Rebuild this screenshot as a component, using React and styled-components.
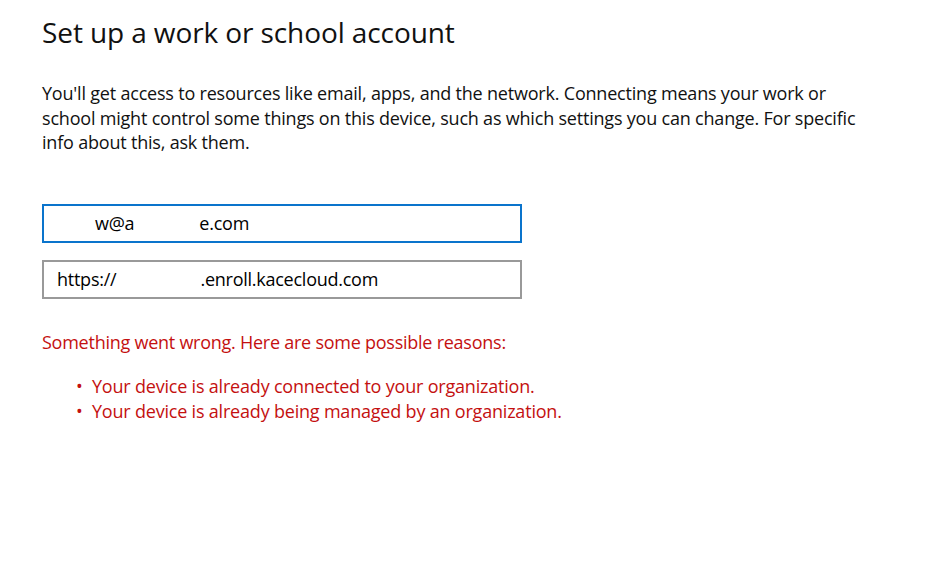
import React from "react";
import styled, { createGlobalStyle } from "styled-components";

const Global = createGlobalStyle`
  html, body { margin: 0; padding: 0; background: #fff; }
  body { font-family: "Open Sans", "Noto Sans", sans-serif; color: #000; }
`;

const Page = styled.div`
  width: 951px;
  height: 566px;
  box-sizing: border-box;
  padding: 12px 0 0 42px;
  display: flex;
  flex-direction: column;
  overflow: hidden;
`;

const Title = styled.h1`
  margin: 0;
  font-family: "Open Sans", sans-serif;
  font-weight: 400;
  font-size: 28px;
  line-height: 40px;
  letter-spacing: -0.1px;
  color: #111;
`;

const Body = styled.p`
  margin: 29px 0 0 0;
  font-size: 18px;
  line-height: 24.5px;
  letter-spacing: -0.2px;
  color: #111;
  white-space: nowrap;
`;

const Field = styled.div`
  box-sizing: border-box;
  width: 480px;
  height: 39px;
  border: 2px solid ${(p) => (p.$focused ? "#0a74cc" : "#999999")};
  margin-top: ${(p) => p.$top}px;
  display: flex;
  align-items: center;
  padding-left: ${(p) => p.$pad}px;
  font-size: 18px;
  letter-spacing: -0.25px;
  color: #000;
  white-space: nowrap;
`;

const Gap = styled.span`
  display: inline-block;
  width: ${(p) => p.$w}px;
`;

const Error = styled.div`
  margin-top: 31px;
  color: #c41010;
  font-size: 18px;
  line-height: 24px;
  letter-spacing: -0.25px;
`;

const Reasons = styled.ul`
  margin: 20px 0 0 0;
  padding: 0 0 0 34px;
  list-style: none;
  color: #c41010;
  font-size: 18px;
  line-height: 25px;
  letter-spacing: -0.2px;
`;

const Reason = styled.li`
  display: flex;
  &::before {
    content: "•";
    width: 16px;
    flex: none;
  }
`;

export default function App() {
  return (
    <>
      <Global />
      <Page>
        <Title>Set up a work or school account</Title>
        <Body>
          You'll get access to resources like email, apps, and the network. Connecting means your work or
          <br />
          school might control some things on this device, such as which settings you can change. For specific
          <br />
          info about this, ask them.
        </Body>
        <Field $focused $top={49} $pad={51}>
          w@a<Gap $w={65} />e.com
        </Field>
        <Field $top={17} $pad={13}>
          https://<Gap $w={84} />.enroll.kacecloud.com
        </Field>
        <Error>Something went wrong. Here are some possible reasons:</Error>
        <Reasons>
          <Reason>Your device is already connected to your organization.</Reason>
          <Reason>Your device is already being managed by an organization.</Reason>
        </Reasons>
      </Page>
    </>
  );
}
